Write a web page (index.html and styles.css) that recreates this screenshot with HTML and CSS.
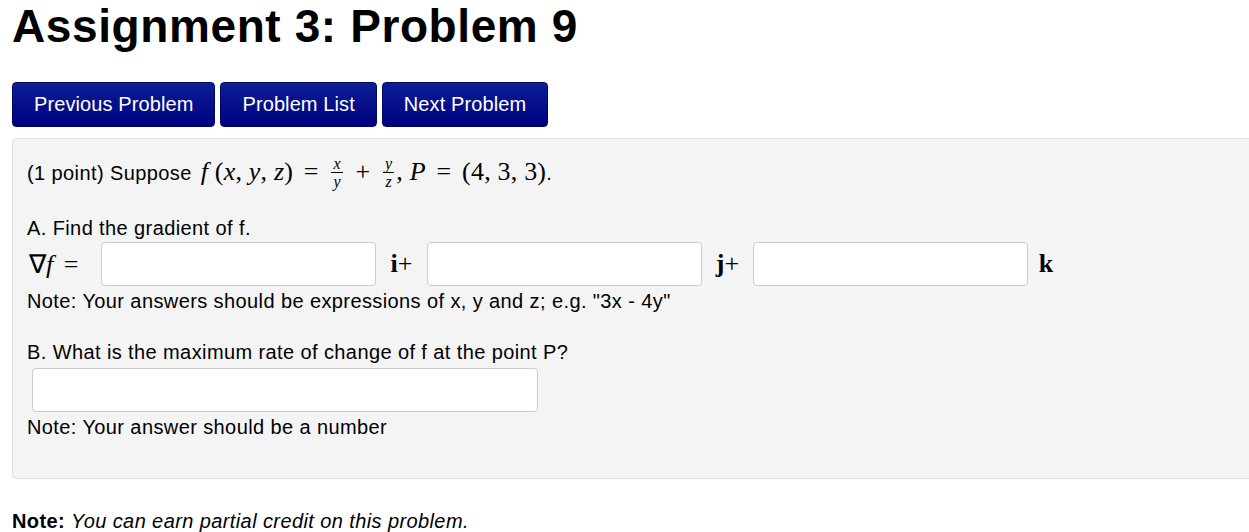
FILE: index.html
```html
<!DOCTYPE html>
<html>
<head>
<meta charset="utf-8">
<link rel="stylesheet" href="styles.css">
</head>
<body>
<div class="page">
  <h1 class="title">Assignment 3: Problem 9</h1>
  <div class="nav">
    <a class="btn">Previous Problem</a>
    <a class="btn">Problem List</a>
    <a class="btn">Next Problem</a>
  </div>
  <div class="problem">
    <p class="intro">(1 point) Suppose <span class="math"><i>f</i> (<i>x</i>, <i>y</i>, <i>z</i>) <span class="op">=</span> <span class="frac"><span class="num"><i>x</i></span><span class="den"><i>y</i></span></span> <span class="op">+</span> <span class="frac"><span class="num"><i>y</i></span><span class="den"><i>z</i></span></span>, <i>P</i> <span class="op">=</span> (4, 3, 3)</span>.</p>
    <p class="partA">A. Find the gradient of f.</p>
    <div class="grad">
      <span class="math lhs">∇<i>f</i> <span class="op">=</span></span>
      <input class="ans" type="text">
      <span class="math unit"><b>i</b>+</span>
      <input class="ans" type="text">
      <span class="math unit"><b>j</b>+</span>
      <input class="ans" type="text">
      <span class="math unit k"><b>k</b></span>
    </div>
    <p class="note">Note: Your answers should be expressions of x, y and z; e.g. "3x - 4y"</p>
    <p class="partB">B. What is the maximum rate of change of f at the point P?</p>
    <input class="ans wide" type="text">
    <p class="note2">Note: Your answer should be a number</p>
  </div>
  <p class="credit"><b>Note:</b> <i>You can earn partial credit on this problem.</i></p>
</div>
</body>
</html>
```

FILE: styles.css
```css
html, body {
  margin: 0;
  padding: 0;
  background: #ffffff;
  overflow: hidden;
}
.page {
  padding: 0 0 0 12px;
  font-family: "Liberation Sans", Arial, sans-serif;
  color: #000;
}
.title {
  margin: 0;
  font-size: 46px;
  line-height: 52px;
  font-weight: bold;
  letter-spacing: 0.6px;
}
.nav {
  display: flex;
  gap: 5px;
  margin-top: 30px;
}
.btn {
  display: flex;
  align-items: center;
  height: 45px;
  padding: 0 21px;
  box-sizing: border-box;
  border-radius: 4px;
  background: linear-gradient(#0b1f96, #00007e);
  border: 1px solid #000a66;
  color: #fff;
  font-size: 20px;
  letter-spacing: 0.1px;
  cursor: pointer;
}
.problem {
  margin-top: 11px;
  margin-right: -20px;
  background: #f4f4f4;
  border: 1px solid #e1e1e1;
  border-radius: 4px;
  padding: 18px 0 39px 14px;
  font-size: 20px;
  letter-spacing: 0.4px;
}
.problem p { margin: 0; }
.math {
  font-family: "Liberation Serif", "Times New Roman", serif;
  font-size: 26px;
  letter-spacing: 0;
}
.math .op { padding: 0 4px; }
.intro {
  height: 32px;
  display: flex;
  align-items: baseline;
  white-space: pre;
}
.intro .math { white-space: pre; margin-left: 3px; letter-spacing: 0.2px; }
.intro .math .op { padding: 0 4px; }
.frac {
  display: inline-flex;
  flex-direction: column;
  align-items: center;
  vertical-align: 11px;
  font-size: 16px;
  line-height: 14px;
  margin: 0 2px;
}
.frac .num { border-bottom: 1px solid #000; padding: 0 2px 1px; }
.frac .den { padding-top: 2px; }
.partA { margin-top: 28px !important; line-height: 23px; }
.grad {
  display: flex;
  align-items: center;
  margin-top: 1px;
  height: 46px;
}
.lhs { width: 72px; padding-left: 2px; }
.ans {
  width: 275px;
  height: 44px;
  box-sizing: border-box;
  border: 1px solid #cccccc;
  border-radius: 4px;
  background: #fff;
  margin: 0;
}
.unit { width: 51px; text-align: center; }
.unit.k { width: 36px; }
.note { margin-top: 3px !important; line-height: 23px; }
.partB { margin-top: 28px !important; line-height: 23px; }
.wide {
  width: 506px;
  display: block;
  margin: 4px 0 0 5px;
}
.note2 { margin-top: 4px !important; line-height: 23px; }
.credit {
  margin: 31px 0 0 0;
  font-size: 20px;
  letter-spacing: 0.4px;
}
```
